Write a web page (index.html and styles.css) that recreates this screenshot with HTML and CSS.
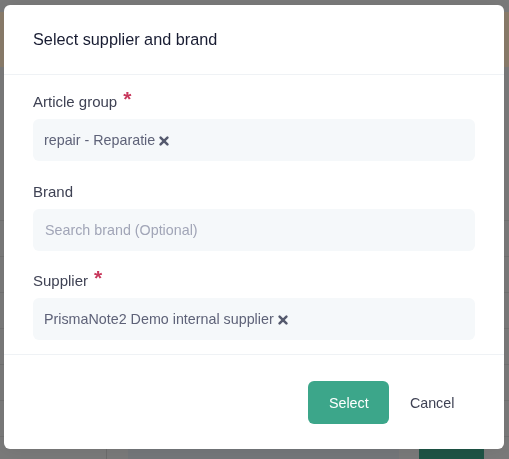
FILE: index.html
```html
<!DOCTYPE html>
<html lang="en">
<head>
<meta charset="utf-8">
<title>Select supplier and brand</title>
<link rel="stylesheet" href="styles.css">
</head>
<body>
<div class="page">
  <div class="page-top"></div>
  <div class="page-banner"></div>
  <div class="page-rows">
    <div class="page-row"></div>
    <div class="page-row"></div>
    <div class="page-row"></div>
    <div class="page-row"></div>
    <div class="page-row"></div>
    <div class="page-row"></div>
    <div class="page-row"></div>
  </div>
  <div class="page-bottom">
    <div class="seg seg-a"></div>
    <div class="seg seg-b"></div>
    <div class="seg seg-c"></div>
    <div class="seg seg-d"></div>
    <div class="seg seg-e"></div>
    <div class="seg seg-f"></div>
  </div>
</div>

<div class="modal">
  <div class="modal-header">
    <h3 class="modal-title">Select supplier and brand</h3>
  </div>
  <div class="modal-body">
    <div class="field">
      <label class="form-label">Article group<span class="req">*</span></label>
      <div class="input">
        <span class="value">repair - Reparatie</span>
        <svg class="xmark" width="10" height="10" viewBox="0 0 10 10"><path d="M1.6 1.6 L8.4 8.4 M8.4 1.6 L1.6 8.4" stroke="#555a6e" stroke-width="2.5" stroke-linecap="round" fill="none"/></svg>
      </div>
    </div>
    <div class="field">
      <label class="form-label">Brand</label>
      <div class="input">
        <span class="placeholder">Search brand (Optional)</span>
      </div>
    </div>
    <div class="field">
      <label class="form-label">Supplier<span class="req">*</span></label>
      <div class="input">
        <span class="value">PrismaNote2 Demo internal supplier</span>
        <svg class="xmark" width="10" height="10" viewBox="0 0 10 10"><path d="M1.6 1.6 L8.4 8.4 M8.4 1.6 L1.6 8.4" stroke="#555a6e" stroke-width="2.5" stroke-linecap="round" fill="none"/></svg>
      </div>
    </div>
  </div>
  <div class="modal-footer">
    <button class="btn btn-select">Select</button>
    <button class="btn btn-cancel">Cancel</button>
  </div>
</div>
</body>
</html>
```

FILE: styles.css
```css
* { box-sizing: border-box; }
html, body { margin: 0; padding: 0; }
body {
  width: 509px;
  height: 459px;
  overflow: hidden;
  background: #7b7b7b;
  font-family: "Liberation Sans", Arial, sans-serif;
}

/* dimmed page behind the modal */
.page {
  width: 509px;
  height: 459px;
  display: flex;
  flex-direction: column;
}
.page-top { height: 12px; background: #7b7b7b; }
.page-banner { height: 55px; background: #8b7d6b; }
.page-rows {
  flex: 1;
  display: flex;
  flex-direction: column;
  padding-top: 118px;
}
.page-row {
  height: 36px;
  border-bottom: 1px solid #727272;
}
.page-bottom {
  height: 10px;
  display: flex;
}
.seg { height: 100%; }
.seg-a { width: 107px; background: #7a7a7a; border-right: 1px solid #6c6c6c; }
.seg-b { width: 21px; background: #7a7a7a; }
.seg-c { width: 271px; background: #74777a; }
.seg-d { width: 20px; background: #7a7a7a; }
.seg-e { width: 65px; background: #1e5345; }
.seg-f { flex: 1; background: #7a7a7a; }

/* modal */
.modal {
  position: fixed;
  left: 4px;
  top: 5px;
  width: 500px;
  height: 444px;
  background: #ffffff;
  border-radius: 6px;
  display: flex;
  flex-direction: column;
  box-shadow: 0 0 20px rgba(0, 0, 0, 0.08);
}
.modal-header {
  padding: 24px 29px 25px;
  border-bottom: 1px solid #eff2f5;
}
.modal-title {
  margin: 0;
  font-size: 16.25px;
  line-height: 20px;
  font-weight: 400;
  color: #181c32;
}
.modal-body {
  padding: 16px 29px 14px;
  display: flex;
  flex-direction: column;
  gap: 19.5px;
  border-bottom: 1px solid #eff2f5;
}
.field {
  display: flex;
  flex-direction: column;
}
.form-label {
  font-size: 15px;
  line-height: 22px;
  color: #3f4254;
  margin-bottom: 6px;
}
.req {
  color: #c8385c;
  font-size: 21px;
  font-weight: 700;
  line-height: 0;
  padding-left: 6px;
  vertical-align: 1px;
}
.input {
  height: 42px;
  background: #f5f8fa;
  border-radius: 6px;
  padding: 0 11px;
  display: flex;
  align-items: center;
  gap: 4px;
  font-size: 14.3px;
}
.value { color: #5e6278; }
.placeholder { color: #a1a5b7; padding-left: 1px; }
.xmark { display: block; margin-top: 1px; }

.modal-footer {
  flex: 1;
  display: flex;
  justify-content: flex-end;
  align-items: flex-start;
  padding: 26px 29px 0;
}
.btn {
  height: 43px;
  padding: 0 20.6px;
  border: 0;
  border-radius: 6px;
  font-family: "Liberation Sans", Arial, sans-serif;
  font-size: 14.3px;
  cursor: pointer;
}
.btn-select {
  background: #3ca68a;
  color: #ffffff;
}
.btn-cancel {
  background: transparent;
  color: #3f4254;
}
```
